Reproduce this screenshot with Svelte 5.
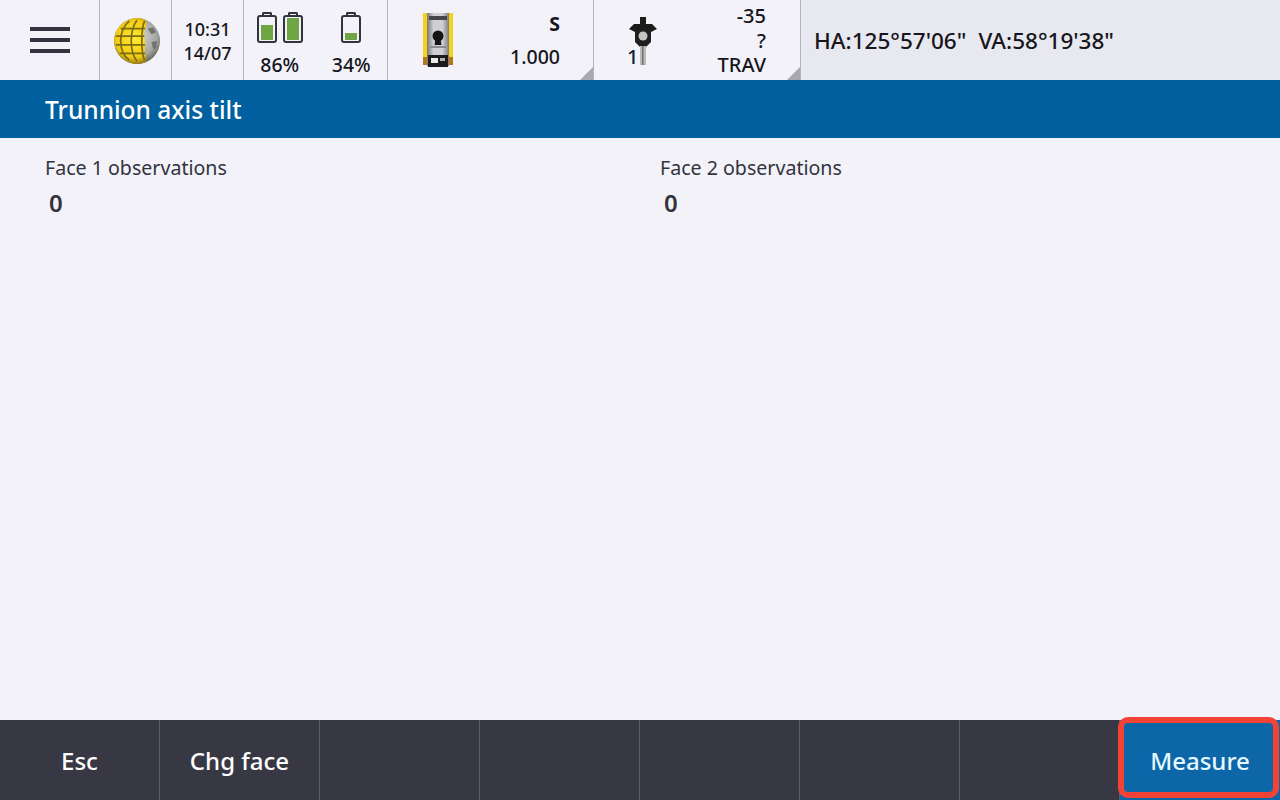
<script>
	const softkeys = ['Esc', 'Chg face', '', '', '', '', ''];
	const fields = [
		{ label: 'Face 1 observations', value: '0' },
		{ label: 'Face 2 observations', value: '0' }
	];
	const meridians = [
		'M17 4C10 10 8 18 8 25s2 15 9 20',
		'M25 3C20 10 19 18 19 25s1 15 6 21',
		'M33 4c-3 6-3 14-3 21s0 14 3 20'
	];
	const parallels = ['M8 12h27', 'M3 20h31', 'M3 29h31', 'M7 38h27'];
</script>

<div class="screen">
	<header class="status">
		<button class="menu" aria-label="Menu">
			<span></span>
			<span></span>
			<span></span>
		</button>

		<div class="cell globe">
			<svg width="48" height="48" viewBox="0 0 50 50">
				<defs>
					<radialGradient id="yellow" cx="45%" cy="45%" r="62%">
						<stop offset="0" stop-color="#ffe92e" />
						<stop offset="0.65" stop-color="#f2cc14" />
						<stop offset="1" stop-color="#6f5510" />
					</radialGradient>
					<radialGradient id="grey" cx="50%" cy="40%" r="62%">
						<stop offset="0" stop-color="#dcdcdc" />
						<stop offset="0.7" stop-color="#a4a4a0" />
						<stop offset="1" stop-color="#55554f" />
					</radialGradient>
					<clipPath id="land">
						<path d="M25 1C12 1 1 12 1 25s11 24 24 24c4 0 8-1 10-3 0-4-2-7-2-11 0-5 1-8 0-12-1-6 0-10 1-13 1-3 1-6-1-8-2-1-5-1-8-1z" />
					</clipPath>
				</defs>
				<circle cx="25" cy="25" r="24" fill="url(#grey)" />
				<g clip-path="url(#land)">
					<circle cx="25" cy="25" r="24" fill="url(#yellow)" />
					<g fill="none" stroke="#7d6c16" stroke-width="1.8">
						{#each meridians as d}
							<path {d} />
						{/each}
						{#each parallels as d}
							<path {d} />
						{/each}
					</g>
				</g>
				<path d="M36 12l6-1 3 5-5 2zM40 26l6-1-1 7-3 2z" fill="#74746f" />
			</svg>
		</div>

		<div class="cell clock">
			<span>10:31</span>
			<span>14/07</span>
		</div>

		<div class="cell power">
			<div class="battery-group">
				<div class="icons">
					<div class="battery"><i style="height: 15px"></i></div>
					<div class="battery"><i style="height: 22px"></i></div>
				</div>
				<span>86%</span>
			</div>
			<div class="battery-group">
				<div class="icons">
					<div class="battery"><i style="height: 7px"></i></div>
				</div>
				<span>34%</span>
			</div>
		</div>

		<div class="cell instrument corner">
			<svg class="station" width="30" height="54" viewBox="0 0 30 54">
				<defs>
					<linearGradient id="body" x1="0" x2="1" y1="0" y2="0">
						<stop offset="0" stop-color="#77777a" />
						<stop offset="0.3" stop-color="#d0d0d4" />
						<stop offset="0.7" stop-color="#d0d0d4" />
						<stop offset="1" stop-color="#7c7c80" />
					</linearGradient>
				</defs>
				<rect x="0" y="0" width="30" height="50" fill="#f3d21c" />
				<rect x="0" y="44" width="30" height="8" fill="#b5761c" />
				<rect x="4" y="0" width="22" height="53" fill="url(#body)" />
				<rect x="6" y="3" width="18" height="4" fill="#46464a" />
				<circle cx="15" cy="23" r="5.5" fill="#141414" />
				<path d="M12.5 26h5l1 6h-7z" fill="#141414" />
				<rect x="7" y="33" width="16" height="2" fill="#8a8a8e" />
				<rect x="5" y="42" width="20" height="12" fill="#1c1c1e" />
				<rect x="8" y="45" width="7" height="5" fill="#ececec" />
				<rect x="17" y="45" width="5" height="3" fill="#b4b4b4" />
			</svg>
			<div class="readout two">
				<strong>S</strong>
				<span>1.000</span>
			</div>
		</div>

		<div class="cell target corner">
			<div class="prism">
				<svg width="28" height="48" viewBox="0 0 28 48">
					<rect x="11" y="0" width="6" height="8" fill="#1b1b1b" />
					<path d="M0 12l5-5h18l5 5-6 3H6z" fill="#1b1b1b" />
					<path d="M6 13h16v12l-5 5h-6l-5-5z" fill="#1f1f1f" />
					<circle cx="14" cy="19" r="4.5" fill="#c4c4c4" />
					<rect x="11" y="29" width="6" height="19" fill="#b9bbbb" />
					<rect x="13" y="29" width="1.5" height="19" fill="#6f7272" />
				</svg>
				<span>1</span>
			</div>
			<div class="readout three">
				<span>-35</span>
				<span>?</span>
				<span>TRAV</span>
			</div>
		</div>

		<div class="angles">
			<span>HA:125°57'06"</span>
			<span>VA:58°19'38"</span>
		</div>
	</header>

	<div class="title">Trunnion axis tilt</div>

	<main class="form">
		{#each fields as field}
			<div class="field">
				<div class="label">{field.label}</div>
				<div class="value">{field.value}</div>
			</div>
		{/each}
	</main>

	<footer class="softkeys">
		{#each softkeys as key}
			<button>{key}</button>
		{/each}
		<button class="primary">Measure</button>
	</footer>
</div>

<style>
	:global(body) {
		background: #f2f2f8;
	}

	.screen {
		width: 1280px;
		height: 800px;
		display: flex;
		flex-direction: column;
		font-family: 'Noto Sans', 'Open Sans', sans-serif;
		background: #f2f2f8;
		color: #1f1f26;
		overflow: hidden;
	}

	.status {
		height: 80px;
		flex: none;
		display: flex;
		font-size: 20px;
		line-height: 26px;
		color: #16161c;
	}

	.menu {
		width: 100px;
		height: 80px;
		padding: 0;
		flex: none;
		display: flex;
		flex-direction: column;
		align-items: center;
		justify-content: center;
		gap: 7px;
		background: none;
		border: 0;
		border-right: 1px solid #b4b4bc;
	}

	.menu span {
		width: 40px;
		height: 4px;
		background: #33333f;
	}

	.cell {
		flex: none;
		height: 80px;
		box-sizing: border-box;
		border-right: 1px solid #b4b4bc;
		position: relative;
	}

	.corner::after {
		content: '';
		position: absolute;
		right: 0;
		bottom: 0;
		border-style: solid;
		border-width: 0 0 13px 13px;
		border-color: transparent transparent #a8a8ae transparent;
	}

	.globe {
		width: 72px;
		display: flex;
		align-items: center;
		justify-content: center;
		padding: 1px 0 0 2px;
	}

	.clock {
		width: 72px;
		display: flex;
		flex-direction: column;
		align-items: center;
		justify-content: center;
		font-size: 18px;
		line-height: 24px;
		font-weight: 500;
		padding-top: 1px;
	}

	.power {
		width: 144px;
		display: flex;
		padding-top: 12px;
	}

	.battery-group {
		width: 72px;
		display: flex;
		flex-direction: column;
		align-items: center;
		gap: 8px;
	}

	.battery-group span {
		font-size: 19.5px;
		font-weight: 500;
	}

	.icons {
		display: flex;
		gap: 6px;
		height: 32px;
	}

	.battery {
		width: 20px;
		height: 28px;
		margin-top: 3px;
		box-sizing: border-box;
		border: 2px solid #33333f;
		border-radius: 3px;
		padding: 2px 2px 1px;
		display: flex;
		align-items: flex-end;
		position: relative;
	}

	.battery::before {
		content: '';
		position: absolute;
		top: -5px;
		left: 3px;
		width: 10px;
		height: 3px;
		box-sizing: border-box;
		border: 2px solid #33333f;
		border-bottom: 0;
		border-radius: 2px 2px 0 0;
	}

	.battery i {
		display: block;
		width: 100%;
		background: #6fa544;
	}

	.instrument {
		width: 206px;
		display: flex;
		justify-content: space-between;
		padding: 0 33px 0 35px;
	}

	.station {
		margin-top: 13px;
	}

	.readout {
		display: flex;
		flex-direction: column;
		align-items: flex-end;
		font-weight: 500;
	}

	.two {
		padding-top: 11px;
		gap: 7px;
		font-size: 19.5px;
	}

	.two strong {
		font-weight: 700;
	}

	.target {
		width: 207px;
		display: flex;
		justify-content: space-between;
		padding: 0 34px 0 35px;
	}

	.prism {
		position: relative;
		padding-top: 17px;
		width: 28px;
	}

	.prism span {
		position: absolute;
		left: -2px;
		top: 44px;
		font-weight: 500;
		color: #10203c;
	}

	.three {
		padding-top: 4px;
		line-height: 24.5px;
	}

	.angles {
		flex: 1;
		display: flex;
		align-items: center;
		gap: 12px;
		padding: 2px 0 0 13px;
		background: #e8e8f0;
		font-size: 22.5px;
		font-weight: 500;
		white-space: pre;
	}

	.title {
		height: 58px;
		flex: none;
		box-sizing: border-box;
		padding-left: 45px;
		display: flex;
		align-items: center;
		background: #0060a0;
		color: #fff;
		font-size: 24.5px;
		font-weight: 500;
	}

	.form {
		flex: 1;
		display: grid;
		grid-template-columns: 615px 1fr;
		align-content: start;
		padding: 17px 0 0 45px;
	}

	.label {
		font-size: 19.6px;
		line-height: 26px;
		color: #33333f;
	}

	.value {
		font-size: 24px;
		line-height: 32px;
		font-weight: 600;
		padding: 6px 0 0 4px;
		color: #33333f;
	}

	.softkeys {
		height: 80px;
		flex: none;
		display: flex;
		background: #383844;
	}

	.softkeys button {
		width: 160px;
		height: 80px;
		padding: 0;
		background: none;
		border: 0;
		border-right: 1px solid #5c5c68;
		color: #fff;
		font-family: inherit;
		font-size: 24px;
		font-weight: 500;
	}

	.softkeys .primary {
		position: relative;
		background: #0d66a8;
		border: 0;
		color: #e4f8ff;
	}

	/* red highlight sits over the key, a bit past its top edge */
	.softkeys .primary::after {
		content: '';
		position: absolute;
		top: -3px;
		left: -2px;
		right: 1px;
		bottom: 2px;
		border: 6px solid #f44336;
		border-radius: 10px;
	}
</style>
